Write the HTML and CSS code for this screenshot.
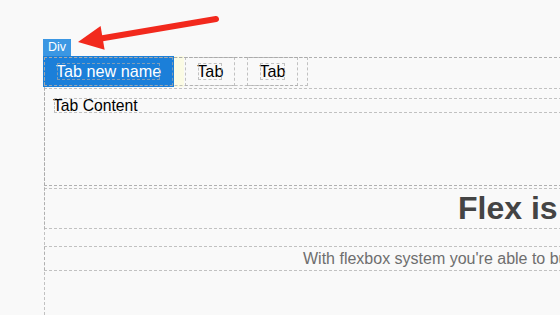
FILE: index.html
```html
<!DOCTYPE html>
<html>
<head>
<meta charset="utf-8">
<title>Tabs</title>
<link rel="stylesheet" href="styles.css">
</head>
<body>
<div class="canvas">
  <div class="wrapper d">
    <div class="tabs d">
      <nav class="tab-nav d">
        <a class="tab tab-active d"><span class="tab-label d">Tab new name</span></a>
        <a class="tab d"><span class="tab-label d">Tab</span></a>
        <a class="tab d"><span class="tab-label d">Tab</span></a>
      </nav>
      <div class="tab-content d">
        <div class="tab-text d">Tab Content</div>
      </div>
    </div>
    <h1 class="title d">Flex is the new black</h1>
    <p class="lead d">With flexbox system you're able to build complex layouts easily and with free responsive on all sizes</p>
  </div>
</div>
<div class="badge">Div</div>
<svg class="arrow" width="560" height="80" viewBox="0 0 560 80">
  <line x1="216" y1="19" x2="98" y2="39" stroke="#f2291d" stroke-width="6" stroke-linecap="round"/>
  <polygon points="78,42 100.6,26.1 104.6,49.7" fill="#f2291d"/>
</svg>
</body>
</html>
```

FILE: styles.css
```css
html, body {
  margin: 0;
  height: 100%;
  overflow: hidden;
  background: #f9f9f9;
  font-family: "Liberation Sans", Arial, Helvetica, sans-serif;
}

.canvas {
  padding: 56px 0 0 43px;
  width: 1200px;
}

.d {
  outline: 1px dashed rgba(170, 170, 170, 0.7);
  outline-offset: -2px;
}

.wrapper {
  min-height: 400px;
}

.tab-nav {
  display: flex;
  width: max-content;
}

.tab {
  display: block;
  padding: 6px 13px;
  margin-right: 10px;
  font-size: 16.2px;
  line-height: 19px;
  color: #000;
  text-decoration: none;
}

.tab-label {
  display: block;
}

.tab-active {
  background: #1b7fd9;
  color: #fff;
  box-shadow: 10px 0 0 #fbfbe4;
}

.tab-content {
  height: 100px;
  box-sizing: border-box;
  padding: 10px;
}

.tab-text {
  font-size: 15.7px;
  line-height: 17px;
  color: #000;
}

.title {
  margin: 0;
  padding: 4px 0 4px 415px;
  font-size: 32px;
  line-height: 35px;
  font-weight: bold;
  color: #444;
  white-space: nowrap;
}

.lead {
  margin: 15px 0 0;
  padding: 5px 0 5px 260px;
  font-size: 16px;
  line-height: 17px;
  color: #6e6e6e;
  white-space: nowrap;
}

.badge {
  position: absolute;
  left: 43px;
  top: 39px;
  height: 17px;
  padding: 0 5px;
  font-size: 12.5px;
  line-height: 17px;
  color: #fff;
  background: #3b97e3;
}

.arrow {
  position: absolute;
  left: 0;
  top: 0;
  pointer-events: none;
}
```
